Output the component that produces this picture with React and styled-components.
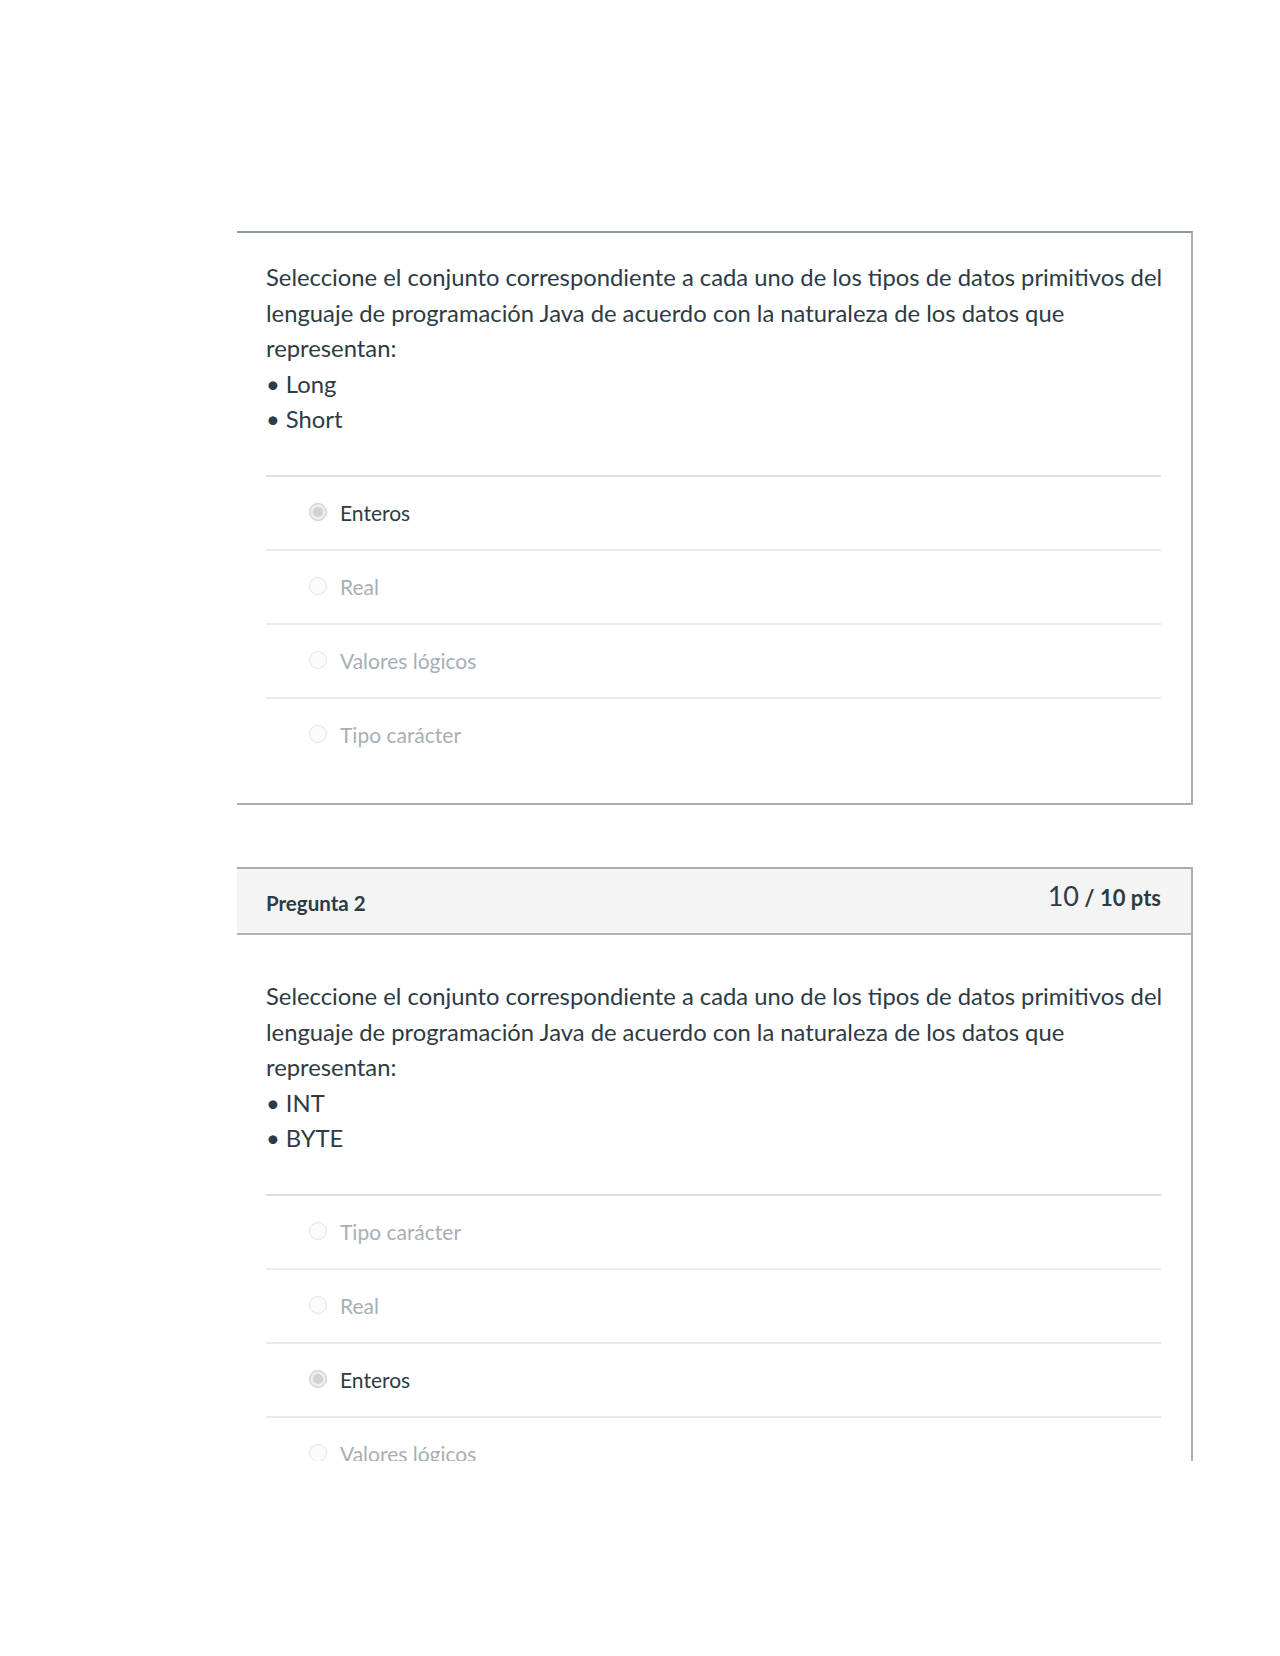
import React from "react";
import styled, { createGlobalStyle } from "styled-components";

const GlobalStyle = createGlobalStyle`
  html, body {
    margin: 0;
    padding: 0;
    background: #ffffff;
  }
  body {
    font-family: "Lato", "Open Sans", sans-serif;
    color: #2d3b45;
  }
`;

const Page = styled.div`
  width: 1280px;
  min-height: 1656px;
  padding: 231px 0 0 237px;
  box-sizing: border-box;
  display: flex;
  flex-direction: column;
  gap: 62px;
`;

const Card = styled.section`
  width: 956px;
  box-sizing: border-box;
  border-top: 2px solid ${(p) => p.$topColor || "#a9adb1"};
  border-right: 2px solid #adb0b3;
  border-bottom: ${(p) => (p.$clipped ? "none" : "2px solid #a9adb1")};
  height: ${(p) => (p.$clipped ? "594px" : "auto")};
  overflow: hidden;
`;

const Header = styled.header`
  height: 64px;
  background: #f4f4f4;
  border-bottom: 2px solid #b2b2b2;
  display: flex;
  align-items: center;
  justify-content: space-between;
  padding: 0 30px 0 29px;
`;

const HeaderTitle = styled.h3`
  margin: 4px 0 0;
  font-size: 20.5px;
  font-weight: 700;
  color: #2d3b45;
`;

const Points = styled.div`
  margin-top: -10px;
  font-size: 22px;
  font-weight: 700;
  color: #2d3b45;
`;

const PointsValue = styled.span`
  font-size: 27px;
  font-weight: 400;
`;

const Body = styled.div`
  padding: ${(p) => (p.$withHeader ? "44px" : "27px")} 30px 32px 29px;
`;

const QuestionText = styled.div`
  font-size: 23.8px;
  line-height: 35.6px;
  white-space: nowrap;
  color: #2d3b45;
  padding-bottom: 37px;
  border-bottom: 2px solid #dedede;
`;

const Bullet = styled.div`
  &::before {
    content: "•";
    margin-right: 6px;
  }
`;

const Option = styled.div`
  height: 72px;
  display: flex;
  align-items: center;
  padding-left: 43px;
  gap: 13px;
  border-bottom: ${(p) => (p.$last ? "none" : "2px solid #ebebeb")};
`;

const Radio = styled.span`
  width: 18px;
  height: 18px;
  border-radius: 50%;
  box-sizing: border-box;
  border: 1px solid ${(p) => (p.$checked ? "#cfcfcf" : "#e4e4e4")};
  background: ${(p) => (p.$checked ? "#d2d2d2" : "#fbfbfb")};
  box-shadow: ${(p) => (p.$checked ? "inset 0 0 0 3px #ededed" : "none")};
  flex-shrink: 0;
  margin-top: -2px;
`;

const OptionLabel = styled.span`
  font-size: 21px;
  color: ${(p) => (p.$checked ? "#2d3b45" : "#a7afb6")};
`;

const Question = ({ items, options, checked, withHeader }) => (
  <Body $withHeader={withHeader}>
    <QuestionText>
      <div>
        Seleccione el conjunto correspondiente a cada uno de los tipos de datos
        primitivos del
        <br />
        lenguaje de programación Java de acuerdo con la naturaleza de los datos
        que
        <br />
        representan:
      </div>
      {items.map((it) => (
        <Bullet key={it}>{it}</Bullet>
      ))}
    </QuestionText>
    {options.map((o, i) => (
      <Option key={o} $last={i === options.length - 1}>
        <Radio $checked={o === checked} />
        <OptionLabel $checked={o === checked}>{o}</OptionLabel>
      </Option>
    ))}
  </Body>
);

export default function App() {
  return (
    <>
      <GlobalStyle />
      <Page>
        <Card $topColor="#8e969e">
          <Question
            items={["Long", "Short"]}
            options={["Enteros", "Real", "Valores lógicos", "Tipo carácter"]}
            checked="Enteros"
          />
        </Card>
        <Card $clipped>
          <Header>
            <HeaderTitle>Pregunta 2</HeaderTitle>
            <Points>
              <PointsValue>10</PointsValue> / 10 pts
            </Points>
          </Header>
          <Question
            withHeader
            items={["INT", "BYTE"]}
            options={["Tipo carácter", "Real", "Enteros", "Valores lógicos"]}
            checked="Enteros"
          />
        </Card>
      </Page>
    </>
  );
}
